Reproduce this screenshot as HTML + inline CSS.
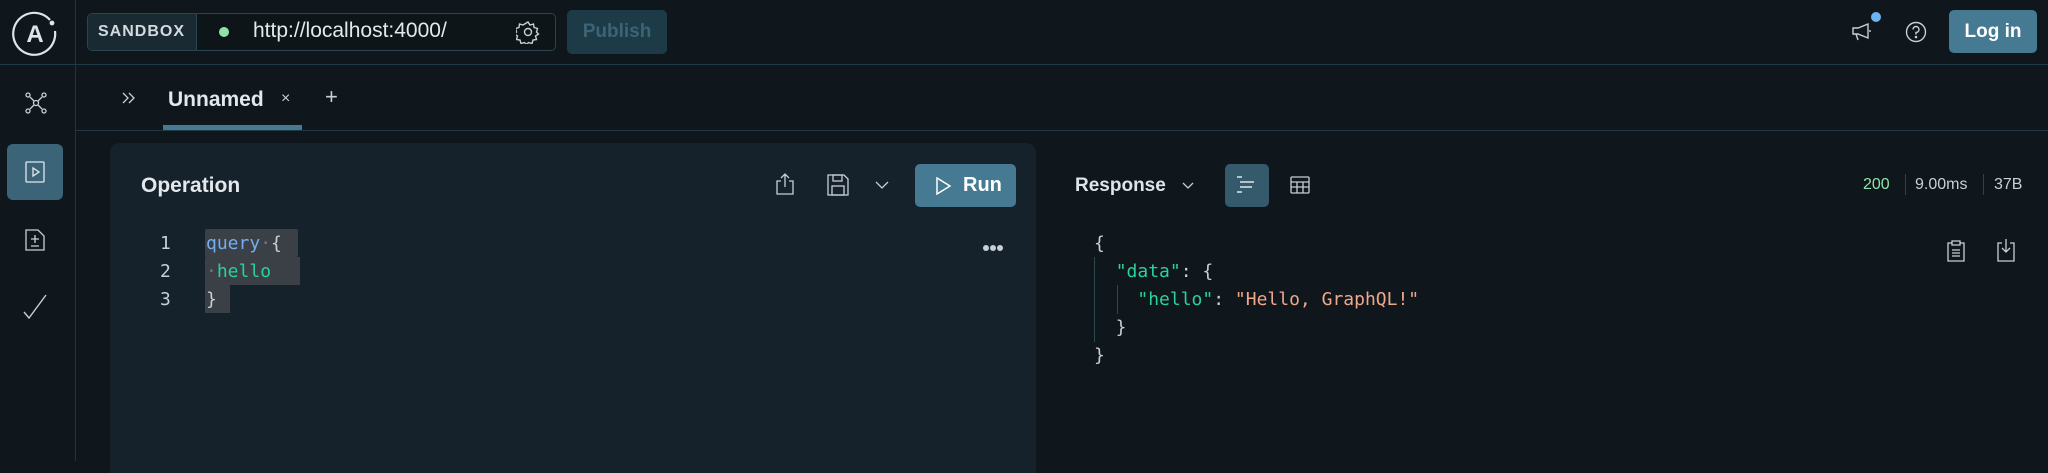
<!DOCTYPE html>
<html><head><style>
*{box-sizing:border-box;margin:0;padding:0}
body{width:2048px;height:461px;background:#0f171d;font-family:"Liberation Sans",sans-serif;color:#e3e8ec;position:relative;overflow:hidden}
.abs{position:absolute}
.mono{font-family:"DejaVu Sans Mono","Liberation Mono",monospace}
</style></head><body>
<div class="abs" style="left:0;top:0;width:76px;height:461px;border-right:1px solid #1f3640;background:#0f171d"></div>
<div class="abs" style="left:0;top:64px;width:2048px;height:1px;background:#1f3a44"></div>
<div class="abs" style="left:76px;top:130px;width:1972px;height:1px;background:#1f3a44"></div>
<!-- logo -->
<svg class="abs" style="left:11px;top:9px" width="48" height="48" viewBox="0 0 48 48"><path d="M39 11 A21 21 0 1 0 44 22" fill="none" stroke="#dfe4e8" stroke-width="2.2"/><circle cx="41" cy="14" r="2.4" fill="#dfe4e8"/><text x="24" y="33" text-anchor="middle" font-family="Liberation Sans" font-weight="bold" font-size="24" fill="#dfe4e8">A</text></svg>
<svg class="abs" style="left:24px;top:91px" width="24" height="24" viewBox="0 0 24 24" fill="none" stroke="#c8d0d6" stroke-width="1.3"><circle cx="4" cy="4" r="2"/><circle cx="20" cy="4" r="2"/><circle cx="4" cy="20" r="2"/><circle cx="20" cy="20" r="2"/><circle cx="12" cy="12" r="2.5"/><path d="M6 6l4 4M18 6l-4 4M6 18l4-4M18 18l-4-4"/></svg>
<div class="abs" style="left:7px;top:144px;width:56px;height:56px;background:#3b6478;border-radius:6px"></div>
<svg class="abs" style="left:25px;top:161px" width="20" height="22" viewBox="0 0 20 22" fill="none" stroke="#e3e8ec" stroke-width="1.3"><rect x="1" y="1" width="18" height="20" rx="1"/><path d="M8 7v8l6-4z"/></svg>
<svg class="abs" style="left:25px;top:229px" width="20" height="22" viewBox="0 0 20 22" fill="none" stroke="#c8d0d6" stroke-width="1.3"><path d="M1 1h12l6 6v14H1z"/><path d="M10 6v8M6 10h8M6 17h8"/></svg>
<svg class="abs" style="left:22px;top:294px" width="26" height="26" viewBox="0 0 26 26" fill="none" stroke="#c8d0d6" stroke-width="1.4"><path d="M2 18l5 6L24 1"/></svg>
<!-- url bar -->
<div class="abs" style="left:87px;top:13px;width:469px;height:38px;border:1px solid #2a4450;border-radius:5px;background:#0e1519"></div>
<div class="abs" style="left:88px;top:14px;width:109px;height:36px;background:#1a2a33;border-right:1px solid #2a4450;border-radius:4px 0 0 4px;font-size:16px;font-weight:bold;letter-spacing:1px;line-height:36px;padding-left:10px;color:#d4dbe0">SANDBOX</div>
<div class="abs" style="left:219px;top:27px;width:10px;height:10px;border-radius:50%;background:#8fe3a8"></div>
<div class="abs" style="left:253px;top:17px;font-size:21px;line-height:28px;color:#e3e8ec">http://localhost:4000/</div>
<svg class="abs" style="left:516px;top:20px" width="24" height="24" viewBox="0 0 24 24" fill="none" stroke="#c8d0d6" stroke-width="1.4"><circle cx="12" cy="12" r="3.5"/><path d="M12 2l2 3 3.5-1 .5 3.5 3.5 1-1 3.5 2 2-3 2 1 3.5-3.5.5-1 3.5-3.5-1-2 2-2-2-3.5 1-1-3.5-3.5-.5 1-3.5-3-2 2-2-1-3.5 3.5-1 .5-3.5 3.5 1z"/></svg>
<div class="abs" style="left:567px;top:10px;width:100px;height:44px;background:#1d3a47;border-radius:5px;color:#3d6474;font-size:19px;font-weight:bold;text-align:center;line-height:44px">Publish</div>
<!-- top right -->
<svg class="abs" style="left:1851px;top:22px" width="24" height="20" viewBox="0 0 24 20" fill="none" stroke="#c8d0d6" stroke-width="1.4"><path d="M2 6h5l10-4v14l-10-4H2zM5 12l2 6M19 8v2"/></svg>
<div class="abs" style="left:1871px;top:12px;width:10px;height:10px;border-radius:50%;background:#6db3f2"></div>
<svg class="abs" style="left:1905px;top:21px" width="22" height="22" viewBox="0 0 22 22" fill="none" stroke="#c8d0d6" stroke-width="1.4"><circle cx="11" cy="11" r="9.5"/><path d="M8 8.5a3 3 0 1 1 3 3v2"/><circle cx="11" cy="16" r=".6" fill="#c8d0d6"/></svg>
<div class="abs" style="left:1949px;top:10px;width:88px;height:43px;background:#457a92;border-radius:5px;font-size:19px;font-weight:bold;text-align:center;line-height:43px;color:#fff">Log in</div>
<!-- tabs -->
<svg class="abs" style="left:122px;top:92px" width="14" height="12" viewBox="0 0 14 12" fill="none" stroke="#c8d0d6" stroke-width="1.3"><path d="M1 1l5 5-5 5M7 1l5 5-5 5"/></svg>
<div class="abs" style="left:168px;top:88px;font-size:21px;font-weight:bold;color:#e3e8ec">Unnamed</div>
<div class="abs" style="left:281px;top:90px;font-size:16px;color:#c8d0d6">×</div>
<div class="abs" style="left:325px;top:84px;font-size:22px;color:#c8d0d6">+</div>
<div class="abs" style="left:163px;top:125px;width:139px;height:5px;background:#457a92"></div>
<!-- operation panel -->
<div class="abs" style="left:110px;top:143px;width:926px;height:330px;background:#15222b;border-radius:10px 10px 0 0"></div>
<div class="abs" style="left:141px;top:174px;font-size:21px;font-weight:bold;color:#e3e8ec">Operation</div>
<svg class="abs" style="left:775px;top:173px" width="20" height="22" viewBox="0 0 20 22" fill="none" stroke="#c8d0d6" stroke-width="1.3"><path d="M6 8H2v13h16V8h-4M10 14V1M6 5l4-4 4 4"/></svg>
<svg class="abs" style="left:827px;top:174px" width="22" height="22" viewBox="0 0 22 22" fill="none" stroke="#c8d0d6" stroke-width="1.3"><path d="M1 1h16l4 4v16H1z"/><rect x="6" y="1" width="9" height="6"/><rect x="5" y="12" width="12" height="9"/></svg>
<svg class="abs" style="left:875px;top:181px" width="14" height="8" viewBox="0 0 14 8" fill="none" stroke="#c8d0d6" stroke-width="1.3"><path d="M1 1l6 6 6-6"/></svg>
<div class="abs" style="left:915px;top:164px;width:101px;height:43px;background:#457a92;border-radius:5px"></div>
<svg class="abs" style="left:935px;top:177px" width="16" height="18" viewBox="0 0 16 18" fill="none" stroke="#fff" stroke-width="1.5"><path d="M2 1v16l13-8z"/></svg>
<div class="abs" style="left:963px;top:174px;font-size:20px;font-weight:bold;color:#fff">Run</div>
<div class="abs" style="left:983px;top:245px;width:6px;height:6px;border-radius:50%;background:#c8d0d6"></div>
<div class="abs" style="left:990px;top:245px;width:6px;height:6px;border-radius:50%;background:#c8d0d6"></div>
<div class="abs" style="left:997px;top:245px;width:6px;height:6px;border-radius:50%;background:#c8d0d6"></div>
<!-- code -->
<div class="abs" style="left:205px;top:229px;width:93px;height:28px;background:#3a4046;border-radius:2px"></div>
<div class="abs" style="left:205px;top:257px;width:95px;height:28px;background:#3a4046"></div>
<div class="abs" style="left:205px;top:285px;width:25px;height:28px;background:#3a4046"></div>
<div class="abs mono" style="left:160px;top:230px;font-size:18px;line-height:28px;color:#c8d0d6;width:12px">1<br>2<br>3</div>
<div class="abs mono" style="left:206px;top:230px;font-size:18px;line-height:28px;white-space:pre"><span style="color:#74aef0">query</span><span style="color:#777">·</span><span style="color:#c8d0d6">{</span>
<span style="color:#777">·</span><span style="color:#28d39a">hello</span>
<span style="color:#c8d0d6">}</span></div>
<!-- response -->
<div class="abs" style="left:1075px;top:175px;font-size:19px;font-weight:bold;color:#dfe4e8">Response</div>
<svg class="abs" style="left:1182px;top:182px" width="12" height="8" viewBox="0 0 12 8" fill="none" stroke="#c8d0d6" stroke-width="1.3"><path d="M1 1l5 5 5-5"/></svg>
<div class="abs" style="left:1225px;top:164px;width:44px;height:43px;background:#345a6c;border-radius:5px"></div>
<svg class="abs" style="left:1236px;top:175px" width="22" height="20" viewBox="0 0 22 20" stroke="#dfe4e8" stroke-width="1.5"><path d="M1 2h5M4 7h14M4 12h12M1 17h5"/></svg>
<svg class="abs" style="left:1290px;top:176px" width="20" height="18" viewBox="0 0 20 18" fill="none" stroke="#c8d0d6" stroke-width="1.3"><rect x="1" y="1" width="18" height="16" rx="1"/><path d="M1 6h18M1 11h18M7 6v11M13 6v11"/></svg>
<div class="abs" style="left:1863px;top:176px;font-size:16px;color:#8fe3a8">200</div>
<div class="abs" style="left:1905px;top:174px;width:1px;height:21px;background:#2a4450"></div>
<div class="abs" style="left:1915px;top:176px;font-size:16px;color:#c8d0d6">9.00ms</div>
<div class="abs" style="left:1983px;top:174px;width:1px;height:21px;background:#2a4450"></div>
<div class="abs" style="left:1994px;top:176px;font-size:16px;color:#c8d0d6">37B</div>
<svg class="abs" style="left:1947px;top:240px" width="18" height="22" viewBox="0 0 18 22" fill="none" stroke="#c8d0d6" stroke-width="1.3"><path d="M5 3H1v18h16V3h-4M5 1h8v4H5zM5 10h8M5 13h8M5 16h8"/></svg>
<svg class="abs" style="left:1997px;top:238px" width="18" height="24" viewBox="0 0 18 24" fill="none" stroke="#c8d0d6" stroke-width="1.3"><path d="M5 5H1v18h16V5h-4M9 1v13M5 10l4 4 4-4"/></svg>
<div class="abs" style="left:1094px;top:257px;width:1px;height:85px;background:#2a4a50"></div>
<div class="abs" style="left:1117px;top:285px;width:1px;height:29px;background:#2a4a50"></div>
<div class="abs mono" style="left:1094px;top:230px;font-size:18px;line-height:28px;white-space:pre;color:#c8d0d6">{
  <span style="color:#28d39a">"data"</span>: {
    <span style="color:#28d39a">"hello"</span>: <span style="color:#f1a78a">"Hello, GraphQL!"</span>
  }
}</div>
</body></html>
